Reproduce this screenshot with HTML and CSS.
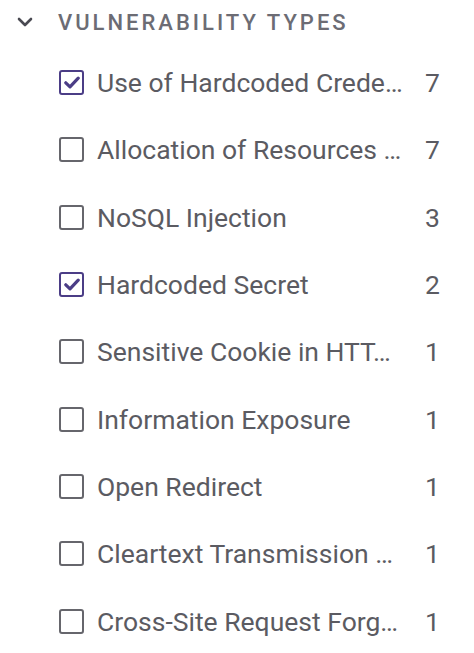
FILE: index.html
```html
<!DOCTYPE html>
<html>
<head>
<meta charset="utf-8">
<link rel="stylesheet" href="styles.css">
</head>
<body>
<div class="panel">
  <div class="header">
    <svg class="chev" width="16" height="10" viewBox="0 0 16 10"><path d="M2 2 L8 8 L14 2" fill="none" stroke="#4a4a52" stroke-width="2.6" stroke-linecap="round" stroke-linejoin="round"/></svg>
    <span class="title">VULNERABILITY TYPES</span>
  </div>
  <ul class="list">
    <li class="row"><span class="box checked"><svg width="16" height="13" viewBox="0 0 16 13"><path d="M1.8 6.8 L6 10.8 L14.2 2.2" fill="none" stroke="#4b3d86" stroke-width="3.2" stroke-linecap="round" stroke-linejoin="round"/></svg></span><span class="name">Use of Hardcoded Crede…</span><span class="count">7</span></li>
    <li class="row"><span class="box"></span><span class="name">Allocation of Resources …</span><span class="count">7</span></li>
    <li class="row"><span class="box"></span><span class="name">NoSQL Injection</span><span class="count">3</span></li>
    <li class="row"><span class="box checked"><svg width="16" height="13" viewBox="0 0 16 13"><path d="M1.8 6.8 L6 10.8 L14.2 2.2" fill="none" stroke="#4b3d86" stroke-width="3.2" stroke-linecap="round" stroke-linejoin="round"/></svg></span><span class="name">Hardcoded Secret</span><span class="count">2</span></li>
    <li class="row"><span class="box"></span><span class="name">Sensitive Cookie in HTT…</span><span class="count">1</span></li>
    <li class="row"><span class="box"></span><span class="name">Information Exposure</span><span class="count">1</span></li>
    <li class="row"><span class="box"></span><span class="name">Open Redirect</span><span class="count">1</span></li>
    <li class="row"><span class="box"></span><span class="name">Cleartext Transmission …</span><span class="count">1</span></li>
    <li class="row"><span class="box"></span><span class="name">Cross-Site Request Forg…</span><span class="count">1</span></li>
  </ul>
</div>
</body>
</html>
```
FILE: styles.css
```css
html, body {
  margin: 0;
  padding: 0;
  background: #ffffff;
}
body {
  font-family: Roboto, "Liberation Sans", sans-serif;
  width: 474px;
  height: 653px;
  overflow: hidden;
}
.panel {
  padding-top: 8px;
}
.header {
  display: flex;
  align-items: center;
  height: 28px;
}
.chev {
  margin-left: 17px;
  width: 16px;
  height: 10px;
}
.title {
  margin-left: 25px;
  font-size: 22px;
  letter-spacing: 3px;
  color: #6c6c74;
  font-weight: 500;
}
.list {
  list-style: none;
  margin: 0;
  padding: 0;
  margin-top: 13px;
}
.row {
  display: flex;
  align-items: center;
  height: 67.3px;
  padding-left: 59px;
  padding-right: 34px;
}
.box {
  flex: 0 0 auto;
  box-sizing: border-box;
  width: 25px;
  height: 25px;
  border: 2px solid #66666c;
  border-radius: 3px;
  display: flex;
  align-items: center;
  justify-content: center;
}
.box.checked {
  border-color: #4b3d86;
}
.name {
  flex: 1 1 auto;
  min-width: 0;
  margin-left: 13px;
  font-size: 26.5px;
  color: #5b5b62;
  white-space: nowrap;
  overflow: hidden;
  text-overflow: ellipsis;
}
.count {
  flex: 0 0 auto;
  margin-left: 12px;
  font-size: 26.5px;
  color: #5b5b62;
  width: 15px;
  text-align: right;
}
```
